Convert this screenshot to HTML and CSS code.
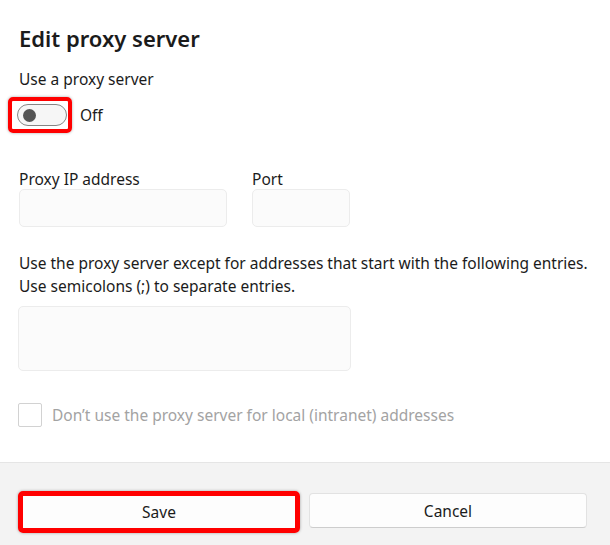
FILE: index.html
```html
<!DOCTYPE html>
<html lang="en">
<head>
  <meta charset="UTF-8">
  <meta name="viewport" content="width=device-width, initial-scale=1.0">
  <title>Edit proxy server</title>
  <link rel="stylesheet" href="styles.css">
</head>
<body>
  <div class="dialog">
    <div class="content">
      <h1>Edit proxy server</h1>
      <p class="label">Use a proxy server</p>
      <div class="toggle-row">
        <span class="highlight">
          <span class="toggle"><span class="knob"></span></span>
        </span>
        <span class="toggle-text">Off</span>
      </div>

      <div class="fields">
        <div class="field">
          <p class="label">Proxy IP address</p>
          <div class="input ip"></div>
        </div>
        <div class="field">
          <p class="label">Port</p>
          <div class="input port"></div>
        </div>
      </div>

      <p class="desc">Use the proxy server except for addresses that start with the following entries.<br>Use semicolons (;) to separate entries.</p>
      <div class="input area"></div>

      <div class="check-row">
        <span class="checkbox"></span>
        <span class="check-text">Don’t use the proxy server for local (intranet) addresses</span>
      </div>
    </div>

    <div class="footer">
      <span class="highlight save-wrap"><button class="btn">Save</button></span>
      <button class="btn cancel">Cancel</button>
    </div>
  </div>
</body>
</html>
```

FILE: styles.css
```css
* {
  box-sizing: border-box;
}
body {
  margin: 0;
  background: #ffffff;
  font-family: 'Noto Sans', 'Open Sans', sans-serif;
  color: #1b1b1b;
}
.dialog {
  width: 610px;
  height: 545px;
  display: flex;
  flex-direction: column;
}
.content {
  flex: 1;
  padding: 24px 0 0 19px;
}
h1 {
  margin: 0;
  font-size: 22px;
  font-weight: 600;
  line-height: 28px;
}
.label {
  margin: 0;
  font-size: 15.5px;
  line-height: 20px;
}
.content > .label {
  margin-top: 17px;
}
.toggle-row {
  display: flex;
  align-items: center;
  gap: 8px;
  margin: 8px 0 0 -11px;
}
.highlight {
  display: inline-flex;
  border: 4px solid #ff0000;
  border-radius: 5px;
  box-shadow: 0 0 3px rgba(0, 0, 0, 0.35);
}
.toggle-row .highlight {
  padding: 3px 1px 3px 5px;
}
.toggle {
  width: 50px;
  height: 22px;
  border: 1px solid #858585;
  border-radius: 12px;
  background: #f6f6f6;
  display: flex;
  align-items: center;
  padding-left: 5px;
}
.knob {
  width: 13px;
  height: 13px;
  border-radius: 50%;
  background: #555555;
}
.toggle-text {
  font-size: 15.5px;
}
.fields {
  display: flex;
  gap: 25px;
  margin-top: 36px;
}
.field .label {
  margin-bottom: 0;
}
.input {
  height: 38px;
  background: #fbfbfb;
  border: 1px solid #ececec;
  border-radius: 5px;
}
.ip {
  width: 208px;
}
.port {
  width: 98px;
}
.desc {
  margin: 25px 0 0;
  font-size: 15.5px;
  line-height: 23px;
}
.area {
  width: 333px;
  height: 65px;
  margin: 8px 0 0 -1px;
}
.check-row {
  display: flex;
  align-items: center;
  gap: 10px;
  margin: 32px 0 0 -1px;
}
.checkbox {
  width: 24px;
  height: 24px;
  border: 1px solid #d2d2d2;
  border-radius: 2px;
  background: #ffffff;
}
.check-text {
  font-size: 15.5px;
  color: #a3a3a3;
}
.footer {
  height: 83px;
  background: #f3f3f3;
  border-top: 1px solid #e5e5e5;
  display: grid;
  grid-template-columns: 282px 278px;
  gap: 9px;
  align-items: start;
  padding: 28px 0 0 18px;
}
.btn {
  height: 35px;
  background: #fdfdfd;
  border: 1px solid #e2e2e2;
  border-bottom-color: #cdcdcd;
  border-radius: 4px;
  font-family: 'Noto Sans', 'Open Sans', sans-serif;
  font-size: 15.5px;
  color: #1b1b1b;
}
.cancel {
  margin-top: 2px;
}
.save-wrap .btn {
  width: 100%;
  height: 32px;
  border: none;
  border-radius: 1px;
}
.save-wrap {
  border-width: 5px;
}
```
